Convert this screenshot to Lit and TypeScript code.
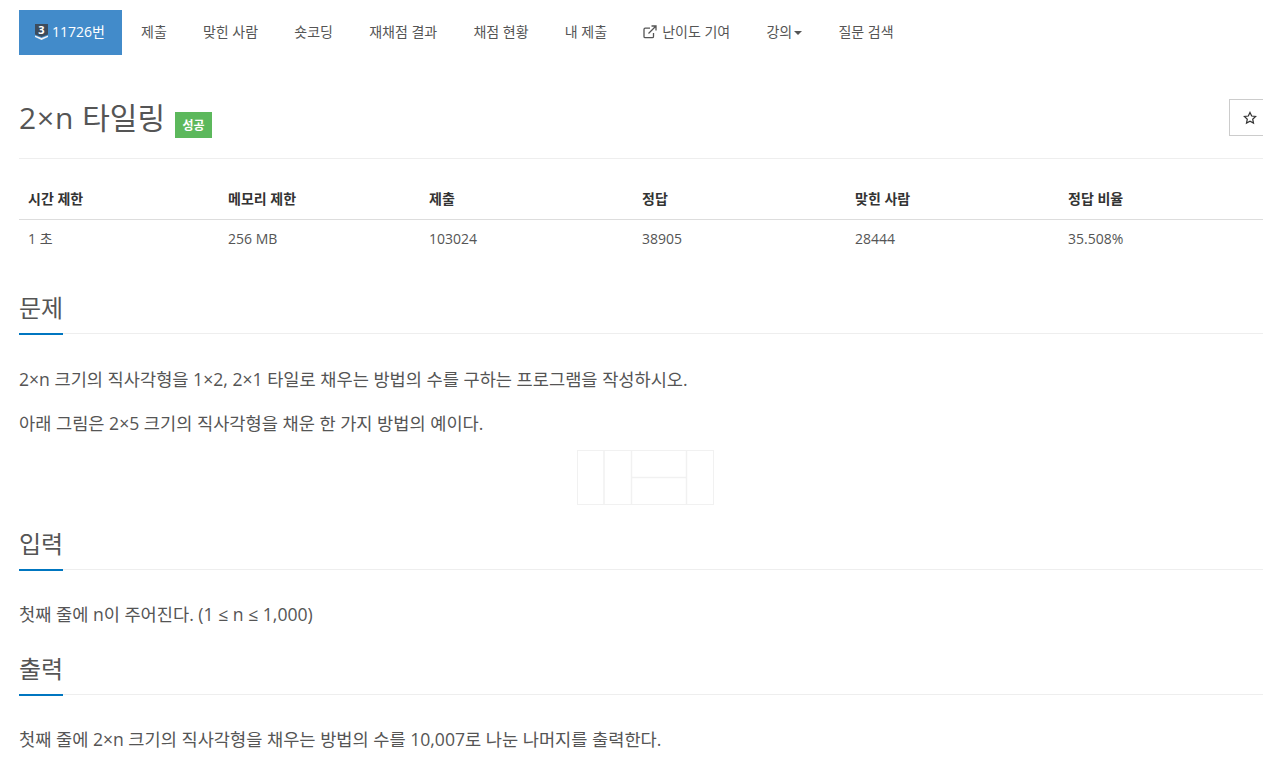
import { LitElement, html, css } from "lit";
import { customElement } from "lit/decorators.js";

const NAV = ["제출", "맞힌 사람", "숏코딩", "재채점 결과", "채점 현황", "내 제출"];
const HEAD = ["시간 제한", "메모리 제한", "제출", "정답", "맞힌 사람", "정답 비율"];
const ROW = ["1 초", "256 MB", "103024", "38905", "28444", "35.508%"];

@customElement("app-root")
export class AppRoot extends LitElement {
  static styles = css`
    :host {
      display: block;
      overflow: hidden;
      height: 765px;
      background: #fff;
      color: #555;
      font-family: "Open Sans", "Noto Sans CJK KR", sans-serif;
      font-size: 14px;
    }
    .page {
      width: 1253px;
      margin-left: 19px;
    }
    nav {
      display: flex;
      padding-top: 10px;
      height: 45px;
    }
    nav a {
      display: flex;
      align-items: center;
      padding: 0 18.1px 2px;
      line-height: 20px;
      color: #555;
      white-space: nowrap;
    }
    nav a.active {
      background: #428bca;
      color: #fff;
      font-weight: 400;
      padding: 0 17px 2px 16px;
      margin-right: 1px;
      gap: 4px;
    }
    .ext { margin-right: 5px; }
    .caret {
      display: inline-block;
      margin-left: 2px;
      margin-top: 2px;
      border-top: 4px solid #555;
      border-left: 4px solid transparent;
      border-right: 4px solid transparent;
    }
    .title {
      display: flex;
      justify-content: space-between;
      align-items: flex-start;
      margin-top: 44px;
      padding-bottom: 20px;
      border-bottom: 1px solid #eee;
    }
    h1 {
      margin: 0;
      font-size: 30px;
      font-weight: 400;
      line-height: 39px;
      color: #555;
      display: flex;
      align-items: flex-end;
      white-space: pre;
    }
    h1 .name { position: relative; top: -1px; }
    h1 .latin { letter-spacing: 0.9px; }
    .label {
      margin-left: 10px;
      width: 37px;
      height: 26px;
      background: #5cb85c;
      color: #fff;
      font-size: 12px;
      font-weight: 700;
      display: flex;
      align-items: center;
      justify-content: center;
    }
    .star {
      width: 41px;
      height: 35px;
      border: 1px solid #ccc;
      display: flex;
      align-items: center;
      color: #333;
    }
    .star svg { margin-left: 13px; }
    .grid {
      display: grid;
      grid-template-columns: 200px 201px 213px 213px 213px 1fr;
      margin-top: 20px;
    }
    .cell {
      padding: 0 9px;
      color: #555;
      line-height: 20px;
    }
    .th {
      font-weight: 700;
      color: #333;
      height: 40px;
      display: flex;
      align-items: center;
      border-bottom: 1px solid #ddd;
    }
    .td {
      height: 38px;
      display: flex;
      align-items: center;
    }
    h2 {
      margin: 0;
      font-size: 24px;
      font-weight: 400;
      line-height: 36px;
      color: #555;
      border-bottom: 1px solid #eee;
      height: 43px;
    }
    h2 span {
      display: inline-block;
      height: 43px;
      border-bottom: 2px solid #0076c0;
    }
    p {
      margin: 0;
      font-size: 17.6px;
      line-height: 24px;
      color: #555;
    }
    .s1 { margin-top: 32px; }
    .b1 { margin-top: 33px; }
    .b2 { margin-top: 20px; }
    .figure {
      display: flex;
      justify-content: center;
      margin-top: 15px;
    }
    .figure svg { display: block; }
    .s2 { margin-top: 21px; }
    .b3 { margin-top: 32px; }
    .s3 { margin-top: 25px; }
    .b4 { margin-top: 32px; }
  `;

  render() {
    return html`
      <div class="page">
        <nav>
          <a class="active">
            <svg width="13" height="16" viewBox="0 0 13 16">
              <path d="M0 0h13v10.5l-6.5 2.5L0 10.5z" fill="#3d4c5c" />
              <path d="M0 11.5l6.5 2.5 6.5-2.5v1.5L6.5 16 0 13z" fill="#eef2f6" />
              <text x="6.5" y="10" text-anchor="middle" font-size="11" font-weight="700" fill="#fff">3</text>
            </svg>
            <span>11726번</span>
          </a>
          ${NAV.map((n) => html`<a>${n}</a>`)}
          <a>
            <svg class="ext" width="14" height="14" viewBox="0 0 14 14" fill="none" stroke="#555" stroke-width="1.3">
              <path d="M10.5 8v3.5a1.2 1.2 0 0 1-1.2 1.2H2.2A1.2 1.2 0 0 1 1 11.5V4.4a1.2 1.2 0 0 1 1.2-1.2H7" />
              <path d="M5.5 8.5L12.5 1.5M8.5 1h4.5v4.5" />
            </svg>
            난이도 기여
          </a>
          <a>강의<i class="caret"></i></a>
          <a>질문 검색</a>
        </nav>

        <div class="title">
          <h1><span class="name"><span class="latin">2×n</span> 타일링</span><span class="label">성공</span></h1>
          <div class="star">
            <svg width="14" height="14" viewBox="0 0 14 14">
              <path d="M7 1.4l1.7 3.6 3.9.5-2.9 2.7.8 3.9L7 10.2l-3.5 1.9.8-3.9-2.9-2.7 3.9-.5z" fill="none" stroke="#333" stroke-width="1.2" />
            </svg>
          </div>
        </div>

        <div class="grid">
          ${HEAD.map((h) => html`<div class="cell th">${h}</div>`)}
          ${ROW.map((r) => html`<div class="cell td">${r}</div>`)}
        </div>

        <h2 class="s1"><span>문제</span></h2>
        <p class="b1">2×n 크기의 직사각형을 1×2, 2×1 타일로 채우는 방법의 수를 구하는 프로그램을 작성하시오.</p>
        <p class="b2">아래 그림은 2×5 크기의 직사각형을 채운 한 가지 방법의 예이다.</p>
        <div class="figure">
          <svg width="137" height="55" viewBox="0 0 137 55" fill="none" stroke="#f1f1f1">
            <rect x="0.5" y="0.5" width="136" height="54" />
            <path stroke-width="1.5" d="M27 0v55M54.5 0v55M109.5 0v55M55 27.5h55" />
          </svg>
        </div>

        <h2 class="s2"><span>입력</span></h2>
        <p class="b3">첫째 줄에 n이 주어진다. (1 ≤ n ≤ 1,000)</p>

        <h2 class="s3"><span>출력</span></h2>
        <p class="b4">첫째 줄에 2×n 크기의 직사각형을 채우는 방법의 수를 10,007로 나눈 나머지를 출력한다.</p>
      </div>
    `;
  }
}
